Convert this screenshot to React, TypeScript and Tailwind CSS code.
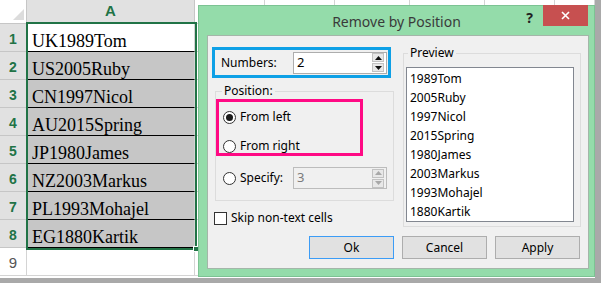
import React from "react";

const names = [
  "UK1989Tom",
  "US2005Ruby",
  "CN1997Nicol",
  "AU2015Spring",
  "JP1980James",
  "NZ2003Markus",
  "PL1993Mohajel",
  "EG1880Kartik",
];

const preview = names.map((n) => n.slice(2));

// widths of columns B..G behind the dialog
const otherCols = ["w-[70px]", "w-[70px]", "w-[75px]", "w-[75px]", "w-[70px]", "w-[40px]"];

function Radio({ checked }: { checked?: boolean }) {
  return (
    <span className="w-[13px] h-[13px] rounded-full border border-[#333] bg-white flex items-center justify-center shrink-0">
      {checked && <span className="w-[7px] h-[7px] rounded-full bg-[#1a1a1a]" />}
    </span>
  );
}

function Spinner({ disabled }: { disabled?: boolean }) {
  const fill = disabled ? "#a8a8a8" : "#111";
  return (
    <div className="flex flex-col gap-[1px] w-[12px]">
      <div className="h-[9px] bg-[#e8e8e8] border border-[#c2c2c2] flex items-center justify-center">
        <svg width="7" height="4" viewBox="0 0 7 4">
          <polygon points="3.5,0 7,4 0,4" fill={fill} />
        </svg>
      </div>
      <div className="h-[9px] bg-[#e8e8e8] border border-[#c2c2c2] flex items-center justify-center">
        <svg width="7" height="4" viewBox="0 0 7 4">
          <polygon points="0,0 7,0 3.5,4" fill={fill} />
        </svg>
      </div>
    </div>
  );
}

function Btn({ label, focused }: { label: string; focused?: boolean }) {
  return (
    <div
      className={`w-[85px] h-[23px] bg-[#e1e1e1] border flex items-center justify-center text-[12px] text-black ${
        focused ? "border-[#3c9cf6]" : "border-[#adadad]"
      }`}
    >
      {label}
    </div>
  );
}

function Dialog() {
  return (
    <div
      className="absolute left-[198px] top-[5px] w-[397px] h-[272px] bg-[#94dcaa] border border-[#7cc393] flex flex-col text-black"
      style={{ fontFamily: '"Noto Sans", "Open Sans", sans-serif' }}
    >
      {/* title bar */}
      <div className="h-[29px] grid grid-cols-[1fr_auto_1fr]">
        <div />
        <div className="text-[14px] text-[#3a3a3a] leading-[29px] pt-[1px]">Remove by Position</div>
        <div className="flex justify-end items-start">
          <span className="text-[14px] font-bold text-[#222] leading-[20px] mt-[2px] mr-[10px]">?</span>
          <div className="w-[45px] h-[21px] -mt-[1px] bg-[#c75050] flex items-center justify-center mr-[6px]">
            <svg width="9" height="9" viewBox="0 0 9 9">
              <path d="M1 1 L8 8 M8 1 L1 8" stroke="white" strokeWidth="1.6" />
            </svg>
          </div>
        </div>
      </div>

      {/* panel */}
      <div className="ml-[8px] w-[382px] h-[234px] bg-[#f0f0f0] border border-[#a4b6a9] flex flex-col text-[12px]">
        <div className="flex items-start">
          {/* left column */}
          <div className="ml-[4px] mt-[11px] w-[182px] flex flex-col">
            <div className="w-[179px] h-[31px] border-[3px] border-[#0ea0e6] flex items-center pl-[6px]">
              <span className="w-[72px]">Numbers:</span>
              <div className="w-[94px] h-[22px] bg-white border border-[#adadad] flex items-center justify-between pl-[3px] pr-[2px]">
                <span className="text-[13px]">2</span>
                <Spinner />
              </div>
            </div>

            <fieldset className="ml-[3px] mt-[5px] w-[179px] border border-[#dcdcdc] pb-[11px]">
              <legend className="ml-[6px] px-[2px] leading-[16px]">Position:</legend>
              <div className="w-[147px] h-[57px] border-[3px] border-[#ff0a84] flex flex-col pl-[4px] pt-[7px] gap-[13px]">
                <label className="flex items-center gap-[4px] h-[16px]">
                  <Radio checked />
                  From left
                </label>
                <label className="flex items-center gap-[4px] h-[16px]">
                  <Radio />
                  From right
                </label>
              </div>
              <div className="mt-[11px] h-[22px] flex items-center pl-[7px]">
                <Radio />
                <span className="ml-[4px] w-[53px]">Specify:</span>
                <div className="w-[94px] h-[22px] border border-[#bcbcbc] flex items-center justify-between pl-[3px] pr-[2px]">
                  <span className="text-[13px] text-[#7a7a7a]">3</span>
                  <Spinner disabled />
                </div>
              </div>
            </fieldset>

            <label className="mt-[10px] ml-[2px] flex items-center gap-[4px] h-[14px]">
              <span className="w-[13px] h-[13px] border border-[#333] bg-white" />
              Skip non-text cells
            </label>
          </div>

          {/* preview */}
          <fieldset className="ml-[9px] mt-[9px] w-[178px] h-[182px] border border-[#dcdcdc]">
            <legend className="ml-[4px] px-[2px] leading-[16px]">Preview</legend>
            <div className="ml-[2px] mt-[6px] w-[168px] h-[155px] bg-white border border-[#828790] pl-[3px] pt-[1px]">
              {preview.map((p) => (
                <div key={p} className="leading-[19px]">
                  {p}
                </div>
              ))}
            </div>
          </fieldset>
        </div>

        <div className="mt-[9px] flex justify-end gap-[8px] pr-[8px]">
          <Btn label="Ok" focused />
          <Btn label="Cancel" />
          <Btn label="Apply" />
        </div>
      </div>
    </div>
  );
}

export default function App() {
  return (
    <div className="relative w-[601px] h-[283px] overflow-hidden bg-white flex flex-col">
      <div className="flex h-[278px]">
        <div className="w-[595px] flex flex-col">
          {/* column headers */}
          <div className="flex h-[24px]">
            <div className="w-[27px] bg-white border-r border-b border-[#c6c6c6] flex items-end justify-end pr-[2px] pb-[3px]">
              <svg width="11" height="11" viewBox="0 0 11 11">
                <polygon points="11,0 11,11 0,11" fill="#dcdcdc" />
              </svg>
            </div>
            <div
              className="w-[168px] bg-[#e1e1e1] border-r border-b border-[#c6c6c6] flex items-center justify-center text-[15px] font-bold text-[#217346]"
              style={{ fontFamily: '"Liberation Sans", Arial, sans-serif' }}
            >
              A
            </div>
            {otherCols.map((w, i) => (
              <div key={i} className={`${w} bg-white border-r border-b border-[#d4d4d4]`} />
            ))}
          </div>

          {/* rows */}
          {names.map((n, i) => (
            <div key={n} className="flex h-[28px]">
              <div
                className="w-[27px] bg-[#e1e1e1] border-r border-b border-[#c6c6c6] flex items-center justify-center pt-[4px] text-[14px] font-bold text-[#217346]"
                style={{ fontFamily: '"Liberation Sans", Arial, sans-serif' }}
              >
                {i + 1}
              </div>
              <div
                className={`w-[168px] border-r border-r-[#d4d4d4] border-b border-b-black flex items-end pl-[5px] text-[18px] leading-[20px] text-black ${
                  i === 0 ? "bg-white" : "bg-[#c6c6c6]"
                }`}
                style={{ fontFamily: '"Liberation Serif", "Times New Roman", serif' }}
              >
                {n}
              </div>
              {otherCols.map((w, j) => (
                <div key={j} className={`${w} border-r border-b border-[#d4d4d4]`} />
              ))}
            </div>
          ))}
          <div className="flex h-[28px]">
            <div
              className="w-[27px] bg-white border-r border-b border-[#d4d4d4] flex items-center justify-center pt-[4px] text-[15px] text-[#555]"
              style={{ fontFamily: '"Liberation Sans", Arial, sans-serif' }}
            >
              9
            </div>
            <div className="w-[168px] border-r border-b border-[#d4d4d4]" />
            {otherCols.map((w, j) => (
              <div key={j} className={`${w} border-r border-b border-[#d4d4d4]`} />
            ))}
          </div>
        </div>
        <div className="flex-1 bg-[#a9a9a9]" />
      </div>
      <div className="flex-1 bg-[#a9a9a9]" />

      {/* selection outline */}
      <div className="absolute left-[26px] top-[22px] w-[171px] h-[228px] border-2 border-[#217346]">
        <div className="absolute -right-[4px] -bottom-[4px] w-[6px] h-[6px] bg-[#217346] border border-white" />
      </div>

      <Dialog />
    </div>
  );
}
